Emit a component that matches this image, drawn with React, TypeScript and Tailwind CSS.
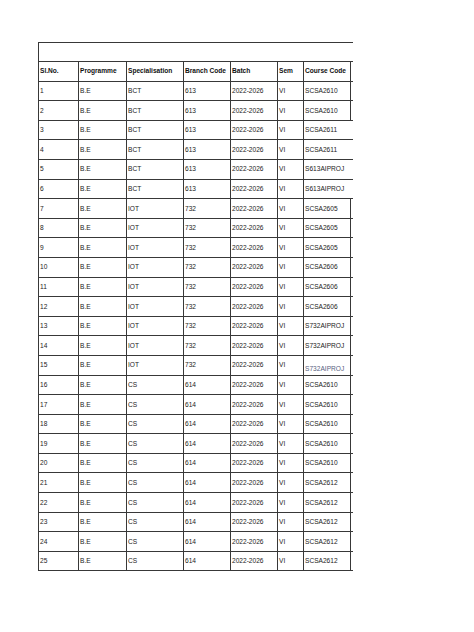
import React from "react";

const widths = ["w-[40px]", "w-[48px]", "w-[57px]", "w-[47px]", "w-[47px]", "w-[26px]", "w-[48px]"];

type Row = { n: string; spec: string; branch: string; code: string; right: boolean };

const rows: Row[] = [
  { n: "1", spec: "BCT", branch: "613", code: "SCSA2610", right: true },
  { n: "2", spec: "BCT", branch: "613", code: "SCSA2610", right: true },
  { n: "3", spec: "BCT", branch: "613", code: "SCSA2611", right: false },
  { n: "4", spec: "BCT", branch: "613", code: "SCSA2611", right: false },
  { n: "5", spec: "BCT", branch: "613", code: "S613AIPROJ", right: false },
  { n: "6", spec: "BCT", branch: "613", code: "S613AIPROJ", right: false },
  { n: "7", spec: "IOT", branch: "732", code: "SCSA2605", right: true },
  { n: "8", spec: "IOT", branch: "732", code: "SCSA2605", right: true },
  { n: "9", spec: "IOT", branch: "732", code: "SCSA2605", right: true },
  { n: "10", spec: "IOT", branch: "732", code: "SCSA2606", right: true },
  { n: "11", spec: "IOT", branch: "732", code: "SCSA2606", right: true },
  { n: "12", spec: "IOT", branch: "732", code: "SCSA2606", right: true },
  { n: "13", spec: "IOT", branch: "732", code: "S732AIPROJ", right: true },
  { n: "14", spec: "IOT", branch: "732", code: "S732AIPROJ", right: true },
  { n: "15", spec: "IOT", branch: "732", code: "S732AIPROJ", right: true },
  { n: "16", spec: "CS", branch: "614", code: "SCSA2610", right: true },
  { n: "17", spec: "CS", branch: "614", code: "SCSA2610", right: true },
  { n: "18", spec: "CS", branch: "614", code: "SCSA2610", right: true },
  { n: "19", spec: "CS", branch: "614", code: "SCSA2610", right: true },
  { n: "20", spec: "CS", branch: "614", code: "SCSA2610", right: true },
  { n: "21", spec: "CS", branch: "614", code: "SCSA2612", right: true },
  { n: "22", spec: "CS", branch: "614", code: "SCSA2612", right: true },
  { n: "23", spec: "CS", branch: "614", code: "SCSA2612", right: true },
  { n: "24", spec: "CS", branch: "614", code: "SCSA2612", right: true },
  { n: "25", spec: "CS", branch: "614", code: "SCSA2612", right: true },
];

function Cell({ i, children, right, bold, special }: { i: number; children: React.ReactNode; right?: boolean; bold?: boolean; special?: boolean }) {
  return (
    <div
      className={`${widths[i]} shrink-0 h-full flex border-l border-[#383838] pl-[1px] ${
        right ? "border-r" : ""
      } ${special ? "items-end pb-[2px] text-[#58627f]" : "items-center pt-[1px]"} ${bold ? "font-bold text-[#111]" : ""}`}
    >
      <span className="leading-none whitespace-nowrap">{children}</span>
    </div>
  );
}

export default function App() {
  return (
    <div className="w-[474px] h-[632px] bg-white pt-[42px] pl-[38px]" style={{ fontFamily: '"Liberation Sans", Arial, sans-serif' }}>
      <div className="w-[315px] text-[6.6px] text-[#1a1a1a]">
        <div className="h-[19.6px] border-t border-l border-b border-[#383838]" />
        <div className="h-[20px] flex border-b border-[#383838]">
          <Cell i={0} bold>Sl.No.</Cell>
          <Cell i={1} bold>Programme</Cell>
          <Cell i={2} bold>Specialisation</Cell>
          <Cell i={3} bold>Branch Code</Cell>
          <Cell i={4} bold>Batch</Cell>
          <Cell i={5} bold>Sem</Cell>
          <Cell i={6} bold right>Course Code</Cell>
        </div>
        {rows.map((r) => (
          <div key={r.n} className="h-[19.6px] flex border-b border-[#383838]">
            <Cell i={0}>{r.n}</Cell>
            <Cell i={1}>B.E</Cell>
            <Cell i={2}>{r.spec}</Cell>
            <Cell i={3}>{r.branch}</Cell>
            <Cell i={4}>2022-2026</Cell>
            <Cell i={5}>VI</Cell>
            <Cell i={6} right={r.right} special={r.n === "15"}>{r.code}</Cell>
          </div>
        ))}
      </div>
    </div>
  );
}
